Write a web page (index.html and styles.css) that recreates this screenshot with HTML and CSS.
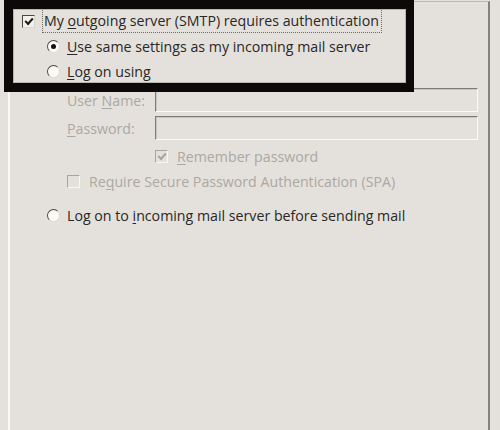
FILE: index.html
```html
<!DOCTYPE html>
<html lang="en">

<head>
    <meta charset="UTF-8">
    <title>Outgoing Server</title>
    <link rel="stylesheet" href="styles.css">
</head>

<body>
    <div class="panel">
        <div class="row top">
            <span class="check checked"></span>
            <span class="focus">My <u>o</u>utgoing server (SMTP) requires authentication</span>
        </div>
        <div class="row sub first">
            <span class="radio selected"></span>
            <span><u>U</u>se same settings as my incoming mail server</span>
        </div>
        <div class="row sub">
            <span class="radio"></span>
            <span><u>L</u>og on using</span>
        </div>

        <div class="field">
            <label class="muted">User <u>N</u>ame:</label>
            <span class="input"></span>
        </div>
        <div class="field">
            <label class="muted"><u>P</u>assword:</label>
            <span class="input"></span>
        </div>
        <div class="row remember">
            <span class="check checked off"></span>
            <span class="muted"><u>R</u>emember password</span>
        </div>
        <div class="row spa">
            <span class="check off"></span>
            <span class="muted">Re<u>q</u>uire Secure Password Authentication (SPA)</span>
        </div>
        <div class="row sub last">
            <span class="radio"></span>
            <span>Log on to <u>i</u>ncoming mail server before sending mail</span>
        </div>

        <div class="highlight"></div>
    </div>
</body>

</html>
```

FILE: styles.css
```css
body {
    margin: 0;
    background-color: #e4e1dc;
    font-family: "Open Sans", "Liberation Sans", sans-serif;
    font-size: 14.2px;
    color: #2a2724;
    overflow: hidden;
}

.panel {
    position: relative;
    margin: 1px 0 0 8px;
    width: 478px;
    height: 440px;
    padding-top: 7px;
    border-top: 1px solid #bcb8b2;
    border-left: 2px solid #faf9f6;
    border-right: 2px solid #85817c;
}

.row {
    display: flex;
    align-items: center;
    height: 24px;
    white-space: nowrap;
}

.top {
    padding-left: 12px;
}

.sub {
    height: 25px;
    padding-left: 37px;
}

.sub.first {
    margin-top: 1px;
}

.sub .radio {
    margin-right: 7px;
}

.remember {
    margin-top: 4px;
    padding-left: 145px;
}

.spa {
    margin-top: 1px;
    padding-left: 57px;
}

.last {
    margin-top: 10px;
}

u {
    text-decoration-thickness: 1px;
    text-underline-offset: 2px;
}

.muted {
    color: #aca8a2;
}

.check {
    width: 11px;
    height: 11px;
    margin-right: 9px;
    background-color: #f2f0ec;
    border: 1px solid #4b4844;
    border-right-color: #d8d5d0;
    border-bottom-color: #d8d5d0;
    position: relative;
    flex-shrink: 0;
}

.check.off {
    background-color: #e4e1dc;
    border-color: #a8a49e #f7f6f3 #f7f6f3 #a8a49e;
}

.check.checked::after {
    content: "";
    position: absolute;
    left: 2px;
    top: 0;
    width: 6px;
    height: 3px;
    border-left: 2px solid #1c1a18;
    border-bottom: 2px solid #1c1a18;
    transform: translate(0, 2px) rotate(-48deg);
}

.check.off.checked::after {
    border-color: #a8a49e;
}

.radio {
    width: 11px;
    height: 11px;
    border-radius: 50%;
    background-color: #fbfaf8;
    border: 1px solid #dcd9d4;
    border-top-color: #4b4844;
    border-left-color: #4b4844;
    position: relative;
    flex-shrink: 0;
}

.radio.selected::after {
    content: "";
    position: absolute;
    left: 3px;
    top: 3px;
    width: 5px;
    height: 5px;
    border-radius: 50%;
    background-color: #141210;
}

.focus {
    padding: 1px 2px 2px 1px;
    margin-left: -1px;
    outline: 1px dotted #6f6b66;
}

.field {
    display: flex;
    align-items: center;
    height: 24px;
    margin-top: 4px;
    padding-left: 57px;
}

.field label {
    width: 88px;
}

.input {
    width: 321px;
    height: 22px;
    border: 1px solid #fbfaf8;
    border-top-color: #7e7a75;
    border-left-color: #7e7a75;
    box-shadow: inset 1px 1px 0 #c9c5bf;
}

/* black frame drawn over the top options */
.highlight {
    position: absolute;
    left: -6px;
    top: -2px;
    width: 393px;
    height: 74px;
    border-style: solid;
    border-color: #0c0908;
    border-width: 9px 8px 9px 9px;
    box-shadow: inset 0 0 0 1px #b9b5af;
    pointer-events: none;
}
```
